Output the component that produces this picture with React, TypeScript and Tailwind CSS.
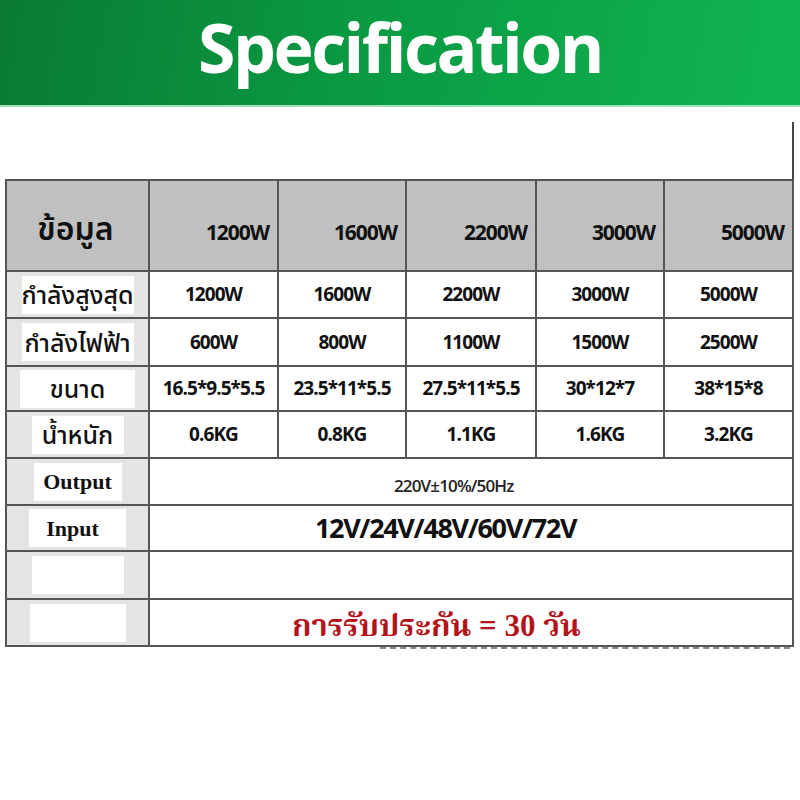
import React from 'react';

const models = ['1200W', '1600W', '2200W', '3000W', '5000W'];

const specRows = [
  { label: 'กำลังสูงสุด', values: ['1200W', '1600W', '2200W', '3000W', '5000W'], box: 'w-[112px]' },
  { label: 'กำลังไฟฟ้า', values: ['600W', '800W', '1100W', '1500W', '2500W'], box: 'w-[112px]' },
  { label: 'ขนาด', values: ['16.5*9.5*5.5', '23.5*11*5.5', '27.5*11*5.5', '30*12*7', '38*15*8'], box: 'w-[115px]' },
  { label: 'น้ำหนัก', values: ['0.6KG', '0.8KG', '1.1KG', '1.6KG', '3.2KG'], box: 'w-[92px]' },
];

const thai = "font-['Noto_Sans_Thai','Noto_Sans','DejaVu_Sans',sans-serif]";
const num = "font-['Open_Sans',sans-serif] font-bold tracking-[-0.05em]";

const Label = ({ children, box }: { children?: React.ReactNode; box: string }) => (
  <div className="border-r-2 border-b-2 border-[#555] bg-[#e4e4e4] flex items-center justify-center">
    <div className={`${box} h-[38px] bg-white flex items-center justify-center whitespace-nowrap`}>{children}</div>
  </div>
);

export default function App() {
  return (
    <div className="w-[800px] h-[800px] bg-white relative overflow-hidden">
      <div className="h-[107px] bg-[linear-gradient(100deg,#0a7a35_0%,#0a9a42_45%,#11b452_100%)] flex items-start justify-center border-b-2 border-[#9fe0b8]">
        <h1 className="font-['Open_Sans',sans-serif] font-bold text-white text-[68px] tracking-[-2.5px] leading-[1.2] mt-[6px]">
          Specification
        </h1>
      </div>

      <div className="absolute left-[792px] top-[122px] w-[2px] h-[58px] bg-[#444]" />

      <div className="ml-[5px] mt-[72px] grid grid-cols-[143px_129px_128px_130px_128px_129px] grid-rows-[91px_47px_48px_45px_47px_47px_46px_48px_47px] border-t-2 border-l-2 border-[#555] w-[789px]">
        <div className="border-r-2 border-b-2 border-[#555] bg-[#c0c0c0] flex items-center justify-center pt-[8px]">
          <span className={`${thai} text-[32px] font-semibold text-[#111] pr-[4px]`}>ข้อมูล</span>
        </div>
        {models.map((m) => (
          <div key={m} className="border-r-2 border-b-2 border-[#555] bg-[#c0c0c0] flex items-center justify-end pr-[8px] pt-[14px]">
            <span className={`${num} text-[21px] text-[#111]`}>{m}</span>
          </div>
        ))}

        {specRows.map((r) => (
          <React.Fragment key={r.label}>
            <Label box={r.box}>
              <span className={`${thai} text-[25px] font-medium text-[#111] leading-none pt-[4px]`}>{r.label}</span>
            </Label>
            {r.values.map((v, i) => (
              <div key={i} className="border-r-2 border-b-2 border-[#555] flex items-center justify-center">
                <span className={`${num} text-[19px] text-[#111] tracking-[-0.04em]`}>{v}</span>
              </div>
            ))}
          </React.Fragment>
        ))}

        <Label box="w-[88px]">
          <span className="font-['Liberation_Serif',serif] font-bold text-[22px] text-[#111]">Output</span>
        </Label>
        <div className="col-span-5 border-r-2 border-b-2 border-[#555] flex items-center pl-[244px] pt-[8px]">
          <span className={`${num} text-[17px] font-semibold text-[#222] tracking-[-0.04em]`}>220V±10%/50Hz</span>
        </div>

        <Label box="w-[97px]">
          <span className="font-['Liberation_Serif',serif] font-bold text-[22px] text-[#111] -ml-[10px]">Input</span>
        </Label>
        <div className="col-span-5 border-r-2 border-b-2 border-[#555] flex items-center pl-[165px]">
          <span className={`${num} text-[27px] text-[#111] tracking-[-0.03em]`}>12V/24V/48V/60V/72V</span>
        </div>

        <Label box="w-[92px]" />
        <div className="col-span-5 border-r-2 border-b-2 border-[#555]" />

        <Label box="w-[96px]" />
        <div className="col-span-5 border-r-2 border-b-2 border-[#555] flex items-center pl-[142px] pt-[8px]">
          <span className="font-['Liberation_Serif','Noto_Serif_Thai','Noto_Sans_Thai',serif] font-bold text-[31px] text-[#b3141b] whitespace-nowrap">
            การรับประกัน = 30 วัน
          </span>
        </div>
      </div>

      <div className="ml-[380px] w-[410px] border-t-2 border-dashed border-[#888]" />
    </div>
  );
}
